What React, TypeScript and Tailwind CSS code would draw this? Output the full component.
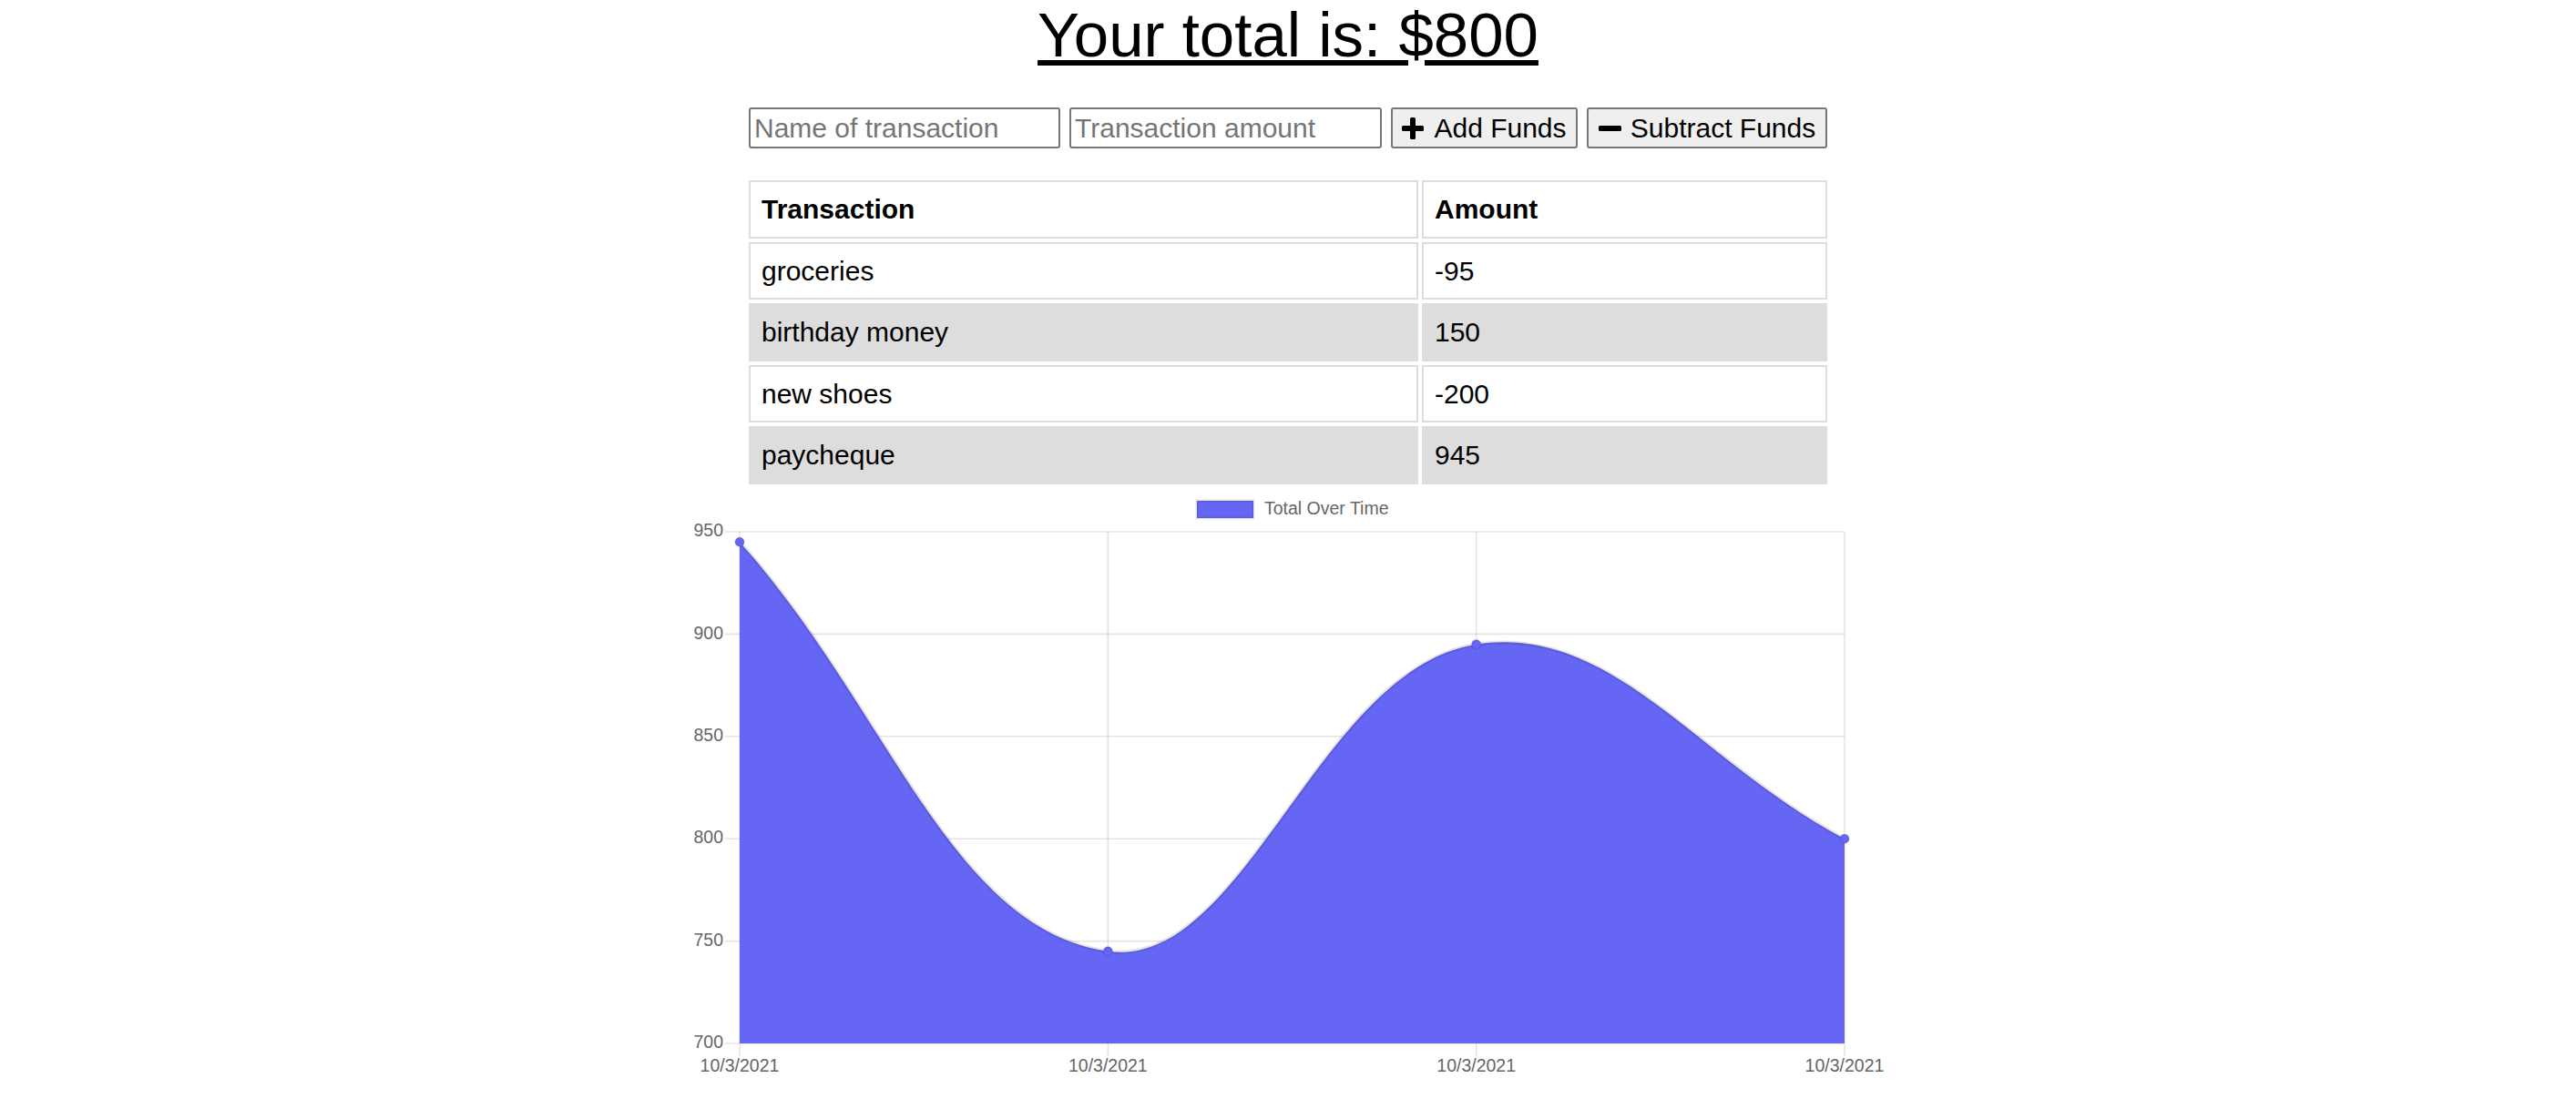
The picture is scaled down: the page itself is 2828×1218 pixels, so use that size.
import React from 'react';

interface Transaction {
  name: string;
  value: number;
}

const transactions: Transaction[] = [
  { name: 'groceries', value: -95 },
  { name: 'birthday money', value: 150 },
  { name: 'new shoes', value: -200 },
  { name: 'paycheque', value: 945 },
];

// chart geometry, in svg units (svg sits at page x 759)
const LEFT = 53;
const RIGHT = 1266;
const TOP = 44;
const BOTTOM = 606;
const MIN = 700;
const MAX = 950;
const FILL = '#6666f5';
const GRID = 'rgba(0,0,0,0.1)';

type Pt = { x: number; y: number };

const yFor = (v: number) => TOP + ((MAX - v) / (MAX - MIN)) * (BOTTOM - TOP);

// same spline as chart.js (tension 0.4)
const splinePath = (pts: Pt[], t = 0.4): string => {
  const cps = pts.map((cur, i) => {
    const prev = pts[i - 1] ?? cur;
    const next = pts[i + 1] ?? cur;
    const d01 = Math.hypot(cur.x - prev.x, cur.y - prev.y);
    const d12 = Math.hypot(next.x - cur.x, next.y - cur.y);
    let s01 = d01 / (d01 + d12);
    let s12 = d12 / (d01 + d12);
    if (isNaN(s01)) s01 = 0;
    if (isNaN(s12)) s12 = 0;
    const fa = t * s01;
    const fb = t * s12;
    return {
      c1: { x: cur.x - fa * (next.x - prev.x), y: cur.y - fa * (next.y - prev.y) },
      c2: { x: cur.x + fb * (next.x - prev.x), y: cur.y + fb * (next.y - prev.y) },
    };
  });
  let d = `M${pts[0].x},${pts[0].y}`;
  for (let i = 1; i < pts.length; i++) {
    const a = cps[i - 1].c2;
    const b = cps[i].c1;
    d += ` C${a.x},${a.y} ${b.x},${b.y} ${pts[i].x},${pts[i].y}`;
  }
  return d;
};

const Chart: React.FC = () => {
  // running totals, oldest first
  const totals: number[] = [];
  let sum = 0;
  [...transactions].reverse().forEach((tx) => {
    sum += tx.value;
    totals.push(sum);
  });
  const step = (RIGHT - LEFT) / (totals.length - 1);
  const pts = totals.map((v, i) => ({ x: LEFT + i * step, y: yFor(v) }));
  const curve = splinePath(pts);
  const area = `${curve} L${RIGHT},${BOTTOM} L${LEFT},${BOTTOM} Z`;
  const yTicks = [950, 900, 850, 800, 750, 700];
  const labelFont = { fontFamily: "'Liberation Sans', Arial, sans-serif", fontSize: 19.5 };

  return (
    <svg width="1310" height="660" viewBox="0 0 1310 660" className="block mt-[4px]">
      {/* legend */}
      <rect x="555" y="10" width="62" height="19" fill={FILL} stroke={GRID} strokeWidth="3" />
      <text x="629" y="20" dominantBaseline="middle" fill="#666" {...labelFont}>
        Total Over Time
      </text>

      {/* grid */}
      {yTicks.map((v) => (
        <g key={v}>
          <line x1={LEFT - 16} x2={RIGHT} y1={yFor(v)} y2={yFor(v)} stroke={GRID} strokeWidth="1.6" />
          <text x={LEFT - 18} y={yFor(v)} textAnchor="end" dominantBaseline="middle" fill="#666" {...labelFont}>
            {v}
          </text>
        </g>
      ))}
      {pts.map((p, i) => (
        <g key={i}>
          <line x1={p.x} x2={p.x} y1={TOP} y2={BOTTOM + 14} stroke={GRID} strokeWidth="1.6" />
          <text x={p.x} y={632} textAnchor="middle" dominantBaseline="middle" fill="#666" {...labelFont}>
            10/3/2021
          </text>
        </g>
      ))}

      {/* data */}
      <path d={area} fill={FILL} />
      <path d={curve} fill="none" stroke={GRID} strokeWidth="4" />
      {pts.map((p, i) => (
        <circle key={i} cx={p.x} cy={p.y} r="5" fill={FILL} stroke={GRID} strokeWidth="1.6" />
      ))}
    </svg>
  );
};

const PlusIcon = () => (
  <svg width="24" height="24" viewBox="0 0 24 24" fill="currentColor">
    <rect x="9" y="0" width="6" height="24" rx="1.5" />
    <rect x="0" y="9" width="24" height="6" rx="1.5" />
  </svg>
);

const MinusIcon = () => (
  <svg width="25" height="24" viewBox="0 0 25 24" fill="currentColor">
    <rect x="0" y="9" width="25" height="6" rx="1.5" />
  </svg>
);

export default function App() {
  return (
    <div className="w-full min-h-[1218px] bg-white flex flex-col items-center text-black font-['Liberation_Sans',Arial,sans-serif]">
      <h1 className="m-0 text-[69px] leading-[77px] font-normal underline">Your total is: $800</h1>

      <div className="mt-[41px] flex gap-[10px]">
        <input
          type="text"
          placeholder="Name of transaction"
          className="w-[342px] h-[45px] border-2 border-[#767676] rounded-[3px] px-[4px] text-[30px] bg-white placeholder:text-[#757575]"
        />
        <input
          type="number"
          placeholder="Transaction amount"
          className="w-[343px] h-[45px] border-2 border-[#767676] rounded-[3px] px-[4px] text-[30px] bg-white placeholder:text-[#757575]"
        />
        <button className="w-[205px] h-[45px] border-2 border-[#767676] rounded-[3px] bg-[#efefef] text-[30px] flex items-center justify-center gap-[11px]">
          <PlusIcon />
          <span>Add Funds</span>
        </button>
        <button className="w-[264px] h-[45px] border-2 border-[#767676] rounded-[3px] bg-[#efefef] text-[30px] flex items-center justify-center gap-[10px]">
          <MinusIcon />
          <span>Subtract Funds</span>
        </button>
      </div>

      <table className="mt-[31px] w-[1192px] table-fixed border-separate border-spacing-[4px] text-[30px]">
        <colgroup>
          <col className="w-[735px]" />
          <col />
        </colgroup>
        <thead>
          <tr>
            <th className="border-2 border-[#dddddd] px-[12px] py-[12px] leading-[35.5px] text-left font-bold">Transaction</th>
            <th className="border-2 border-[#dddddd] px-[12px] py-[12px] leading-[35.5px] text-left font-bold">Amount</th>
          </tr>
        </thead>
        <tbody>
          {transactions.map((tx, i) => (
            <tr key={tx.name} className={i % 2 === 1 ? 'bg-[#dddddd]' : 'bg-white'}>
              <td className="border-2 border-[#dddddd] px-[12px] py-[12px] leading-[35.5px]">{tx.name}</td>
              <td className="border-2 border-[#dddddd] px-[12px] py-[12px] leading-[35.5px]">{tx.value}</td>
            </tr>
          ))}
        </tbody>
      </table>

      <Chart />
    </div>
  );
}
